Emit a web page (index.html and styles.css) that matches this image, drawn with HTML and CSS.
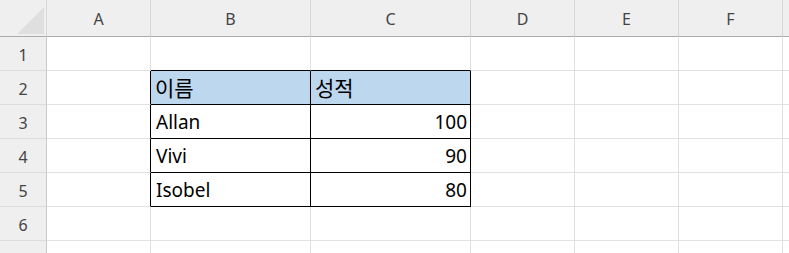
FILE: index.html
```html
<!DOCTYPE html>
<html lang="ko">

<head>
    <meta charset="UTF-8">
    <meta name="viewport" content="width=device-width, initial-scale=1.0">
    <title>Sheet1</title>
    <link rel="stylesheet" href="styles.css">
</head>

<body>
    <div class="sheet">
        <!-- 열 머리글 -->
        <div class="corner"><span class="tri"></span></div>
        <div class="col_head">A</div>
        <div class="col_head">B</div>
        <div class="col_head">C</div>
        <div class="col_head">D</div>
        <div class="col_head">E</div>
        <div class="col_head">F</div>
        <div class="col_head"></div>

        <!-- 1행 -->
        <div class="row_head">1</div>
        <div class="cell"></div>
        <div class="cell edge_b"></div>
        <div class="cell edge_b"></div>
        <div class="cell"></div>
        <div class="cell"></div>
        <div class="cell"></div>
        <div class="cell"></div>

        <!-- 2행: 표 머리 -->
        <div class="row_head">2</div>
        <div class="cell edge_r"></div>
        <div class="cell tbl th">이름</div>
        <div class="cell tbl th">성적</div>
        <div class="cell"></div>
        <div class="cell"></div>
        <div class="cell"></div>
        <div class="cell"></div>

        <div class="row_head">3</div>
        <div class="cell edge_r"></div>
        <div class="cell tbl">Allan</div>
        <div class="cell tbl num">100</div>
        <div class="cell"></div>
        <div class="cell"></div>
        <div class="cell"></div>
        <div class="cell"></div>

        <div class="row_head">4</div>
        <div class="cell edge_r"></div>
        <div class="cell tbl">Vivi</div>
        <div class="cell tbl num">90</div>
        <div class="cell"></div>
        <div class="cell"></div>
        <div class="cell"></div>
        <div class="cell"></div>

        <div class="row_head">5</div>
        <div class="cell edge_r"></div>
        <div class="cell tbl">Isobel</div>
        <div class="cell tbl num">80</div>
        <div class="cell"></div>
        <div class="cell"></div>
        <div class="cell"></div>
        <div class="cell"></div>

        <div class="row_head">6</div>
        <div class="cell"></div>
        <div class="cell"></div>
        <div class="cell"></div>
        <div class="cell"></div>
        <div class="cell"></div>
        <div class="cell"></div>
        <div class="cell"></div>

        <div class="row_head">7</div>
        <div class="cell"></div>
        <div class="cell"></div>
        <div class="cell"></div>
        <div class="cell"></div>
        <div class="cell"></div>
        <div class="cell"></div>
        <div class="cell"></div>
    </div>
</body>

</html>
```

FILE: styles.css
```css
* {
    margin: 0;
    padding: 0;
    box-sizing: border-box;
}

body {
    background-color: #fff;
    overflow: hidden;
    font-family: "Noto Sans", "Noto Sans CJK KR", sans-serif;
}

.sheet {
    display: grid;
    grid-template-columns: 47px 104px 160px 160px 104px 104px 104px 1fr;
    grid-template-rows: 37px repeat(7, 34px);
    width: 789px;
    height: 253px;
    overflow: hidden;
}

/* 왼쪽 위 모서리 */
.corner {
    display: flex;
    align-items: flex-start;
    padding: 7px 0 0 17px;
    background-color: #efefef;
    border-right: 1px solid #d8d8d8;
    border-bottom: 1px solid #ababab;
}

.tri {
    width: 27px;
    height: 27px;
    background-color: #dfdfdf;
    clip-path: polygon(100% 0, 100% 100%, 0 100%);
}

.col_head {
    display: flex;
    align-items: center;
    justify-content: center;
    padding-top: 2px;
    background-color: #efefef;
    border-right: 1px solid #d8d8d8;
    border-bottom: 1px solid #ababab;
    color: #444;
    font-size: 16px;
}

.row_head {
    display: flex;
    align-items: center;
    justify-content: center;
    padding-top: 2px;
    background-color: #efefef;
    border-right: 1px solid #c8c8c8;
    border-bottom: 1px solid #dcdcdc;
    color: #444;
    font-size: 16px;
}

.cell {
    display: flex;
    align-items: flex-end;
    padding: 0 4px 2px 5px;
    border-right: 1px solid #e1e1e1;
    border-bottom: 1px solid #e1e1e1;
    color: #000;
    font-size: 19px;
    line-height: 28px;
    white-space: nowrap;
}

/* 표 테두리 */
.tbl {
    border-right-color: #000;
    border-bottom-color: #000;
}

.edge_b {
    border-bottom-color: #000;
}

.edge_r {
    border-right-color: #000;
}

.th {
    padding-left: 4px;
    background-color: #bdd7ee;
    font-size: 21px;
}

.num {
    justify-content: flex-end;
    padding-right: 3px;
}
```
